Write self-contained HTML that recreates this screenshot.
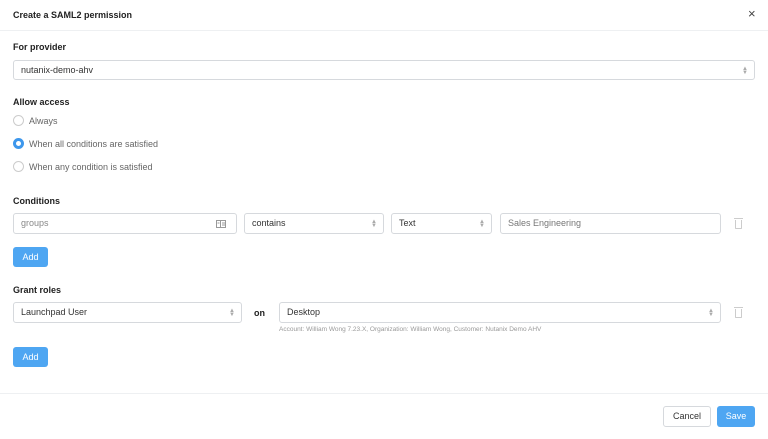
<!DOCTYPE html>
<html><head><style>
*{box-sizing:border-box;margin:0;padding:0}
body{width:768px;height:439px;background:#fff;font-family:"Liberation Sans",sans-serif;font-size:9px;color:#333;position:relative;overflow:hidden}
.a{position:absolute}
.lbl{font-weight:bold;color:#222;font-size:9px}
.box{position:absolute;border:1px solid #d6d9dd;border-radius:3px;background:#fff;height:21px;line-height:19px;padding-left:7px;color:#333}
.arr{position:absolute;right:6px;top:0;color:#aaa;font-size:6px;line-height:4px;padding-top:6px;text-align:center}
.radio{position:absolute;left:13px;width:11px;height:11px;border:1px solid #ccc;border-radius:50%;background:#fff}
.rt{position:absolute;left:29px;color:#666}
.btn{position:absolute;background:#4ea6f2;color:#fff;border-radius:3px;text-align:center;line-height:20px;height:20px}
.trash{position:absolute;width:7px;height:9px;border:1px solid #ccc;border-top:none;border-radius:0 0 1px 1px}
.trash:before{content:"";position:absolute;left:-2px;top:-2px;width:9px;height:1px;background:#ccc}
</style></head><body>
<div class="a lbl" style="left:13px;top:10px">Create a SAML2 permission</div>
<div class="a" style="left:748px;top:6px;font-size:13px;color:#444">×</div>
<div class="a" style="left:0;top:30px;width:768px;height:1px;background:#eef0f2"></div>

<div class="a lbl" style="left:13px;top:42px">For provider</div>
<div class="box" style="left:13px;top:60px;width:742px;height:20px;line-height:18px">nutanix-demo-ahv<div class="arr">▲<br>▼</div></div>

<div class="a lbl" style="left:13px;top:97px">Allow access</div>
<div class="radio" style="top:115px"></div><div class="rt" style="top:116px">Always</div>
<div class="radio" style="top:138px;border:3px solid #3d97ec"></div><div class="rt" style="top:139px">When all conditions are satisfied</div>
<div class="radio" style="top:161px"></div><div class="rt" style="top:162px">When any condition is satisfied</div>

<div class="a lbl" style="left:13px;top:196px">Conditions</div>
<div class="box" style="left:13px;top:213px;width:224px;color:#888">groups
<svg class="a" style="right:10px;top:6px" width="10" height="8" viewBox="0 0 10 8"><rect x="0.5" y="0.5" width="9" height="7" fill="none" stroke="#999"/><line x1="4.5" y1="1" x2="4.5" y2="7" stroke="#999"/><line x1="6" y1="3" x2="9" y2="3" stroke="#999"/><line x1="6" y1="5" x2="9" y2="5" stroke="#999"/><line x1="1.5" y1="3" x2="3.5" y2="3" stroke="#999"/></svg></div>
<div class="box" style="left:244px;top:213px;width:140px">contains<div class="arr">▲<br>▼</div></div>
<div class="box" style="left:391px;top:213px;width:101px">Text<div class="arr">▲<br>▼</div></div>
<div class="box" style="left:500px;top:213px;width:221px;color:#777">Sales Engineering</div>
<div class="trash" style="left:735px;top:220px"></div>
<div class="btn" style="left:13px;top:247px;width:35px">Add</div>

<div class="a lbl" style="left:13px;top:285px">Grant roles</div>
<div class="box" style="left:13px;top:302px;width:229px">Launchpad User<div class="arr">▲<br>▼</div></div>
<div class="a lbl" style="left:254px;top:308px">on</div>
<div class="box" style="left:279px;top:302px;width:442px">Desktop<div class="arr">▲<br>▼</div></div>
<div class="a" style="left:279px;top:326px;font-size:6.5px;color:#999">Account: William Wong 7.23.X, Organization: William Wong, Customer: Nutanix Demo AHV</div>
<div class="trash" style="left:735px;top:309px"></div>
<div class="btn" style="left:13px;top:347px;width:35px">Add</div>

<div class="a" style="left:0;top:393px;width:768px;height:1px;background:#eef0f2"></div>
<div class="a" style="left:663px;top:406px;width:48px;height:21px;border:1px solid #d6d9dd;border-radius:3px;text-align:center;line-height:19px;color:#333">Cancel</div>
<div class="btn" style="left:717px;top:406px;width:38px;height:21px;line-height:21px">Save</div>
</body></html>
